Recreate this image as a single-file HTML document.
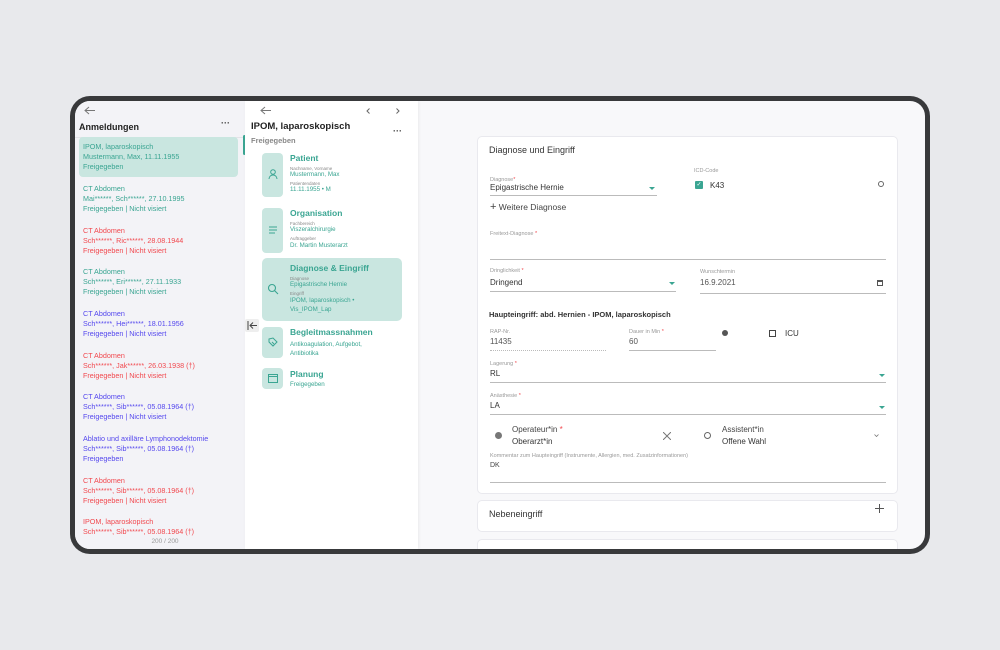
<!DOCTYPE html>
<html><head><meta charset="utf-8"><style>
*{margin:0;padding:0;box-sizing:border-box}
body{width:1000px;height:650px;background:#e8e9ec;font-family:"Liberation Sans",sans-serif;position:relative;overflow:hidden}
.a{position:absolute;white-space:nowrap}
#dev{position:absolute;left:70px;top:96px;width:860px;height:458px;background:#38393b;border-radius:20px}
#scr{position:absolute;left:75px;top:101px;width:850px;height:448px;border-radius:15px;overflow:hidden;background:#f8f8fa}
#left{position:absolute;left:0;top:0;width:170px;height:448px;background:#f3f3f7}
#mid{position:absolute;left:170px;top:0;width:173px;height:448px;background:#fff;box-shadow:1px 0 3px rgba(0,0,0,.06)}
.it{position:absolute;left:8px;font-size:7.2px;line-height:10px}
.g{color:#3aa592}.r{color:#f2494f}.b{color:#5548ee}
.card{position:absolute;background:#fff;border:1px solid #e9e9ee;border-radius:5px}
.lb{position:absolute;font-size:5.5px;color:#999;white-space:nowrap}
.vl{position:absolute;font-size:8px;color:#333;white-space:nowrap}
.ln{position:absolute;height:1px;background:#bbb}
.tri{position:absolute;width:0;height:0;border-left:3px solid transparent;border-right:3px solid transparent;border-top:3px solid #3aa592}
.ic{position:absolute;left:17px;width:21px;background:#c9e6e0;border-radius:4px}
.mt{position:absolute;left:45px;font-size:8.5px;color:#3aa592;font-weight:bold}
.ms{position:absolute;left:45px;font-size:4.5px;color:#888}
.mv{position:absolute;left:45px;font-size:6.2px;color:#3aa592}
.arr{position:absolute;top:5px}
</style></head><body>
<div id="dev"></div>
<div id="scr">
 <div id="left">
  <svg class="arr" style="left:9px" width="12" height="9" viewBox="0 0 12 9" fill="none" stroke="#777" stroke-width="1"><path d="M11 4.5H1M5 1L1 4.5 5 8"/></svg>
  <div class="a" style="left:4px;top:21px;font-size:9px;font-weight:bold;color:#222">Anmeldungen</div>
  <div class="a" style="left:146px;top:17px;font-size:9px;color:#444;font-weight:bold">···</div>
  <div style="position:absolute;left:0;top:36px;width:170px;height:1px;background:#e3e3e8"></div>
  <div style="position:absolute;left:4px;top:36px;width:159px;height:40px;background:#c9e6e0;border-radius:4px"></div>
  <div class="it g" style="top:41px">IPOM, laparoskopisch<br>Mustermann, Max, 11.11.1955<br>Freigegeben</div>
  <div class="it g" style="top:83px">CT Abdomen<br>Mai******, Sch******, 27.10.1995<br>Freigegeben | Nicht visiert</div>
  <div class="it r" style="top:125px">CT Abdomen<br>Sch******, Ric******, 28.08.1944<br>Freigegeben | Nicht visiert</div>
  <div class="it g" style="top:166px">CT Abdomen<br>Sch******, Eri******, 27.11.1933<br>Freigegeben | Nicht visiert</div>
  <div class="it b" style="top:208px">CT Abdomen<br>Sch******, Hei******, 18.01.1956<br>Freigegeben | Nicht visiert</div>
  <div class="it r" style="top:250px">CT Abdomen<br>Sch******, Jak******, 26.03.1938 (†)<br>Freigegeben | Nicht visiert</div>
  <div class="it b" style="top:291px">CT Abdomen<br>Sch******, Sib******, 05.08.1964 (†)<br>Freigegeben | Nicht visiert</div>
  <div class="it b" style="top:333px">Ablatio und axilläre Lymphonodektomie<br>Sch******, Sib******, 05.08.1964 (†)<br>Freigegeben</div>
  <div class="it r" style="top:375px">CT Abdomen<br>Sch******, Sib******, 05.08.1964 (†)<br>Freigegeben | Nicht visiert</div>
  <div class="it r" style="top:416px">IPOM, laparoskopisch<br>Sch******, Sib******, 05.08.1964 (†)</div>
  <div class="a" style="left:60px;top:437px;font-size:6.5px;color:#999;background:#f3f3f7;width:60px;text-align:center;height:11px">200 / 200</div>
 </div>
 <div style="position:absolute;left:168px;top:34px;width:3px;height:20px;background:#3aa592;border-radius:2px"></div>
 <div id="mid">
  <svg class="arr" style="left:15px" width="12" height="9" viewBox="0 0 12 9" fill="none" stroke="#777" stroke-width="1"><path d="M11 4.5H1M5 1L1 4.5 5 8"/></svg>
  <svg class="a" style="left:121px;top:7px" width="4" height="6" viewBox="0 0 4 6" fill="none" stroke="#666" stroke-width="1"><path d="M3.5 .5L1 3l2.5 2.5"/></svg>
  <svg class="a" style="left:151px;top:7px" width="4" height="6" viewBox="0 0 4 6" fill="none" stroke="#666" stroke-width="1"><path d="M.5 .5L3 3 .5 5.5"/></svg>
  <div class="a" style="left:6px;top:20px;font-size:9.5px;font-weight:bold;color:#222">IPOM, laparoskopisch</div>
  <div class="a" style="left:148px;top:25px;font-size:9px;color:#444;font-weight:bold">···</div>
  <div class="a" style="left:6px;top:35px;font-size:7.5px;color:#888;font-weight:bold">Freigegeben</div>
  <div class="ic" style="top:52px;height:44px"></div>
  <svg class="a" style="left:22px;top:67px" width="12" height="12" viewBox="0 0 12 12" fill="none" stroke="#3aa592" stroke-width="1"><circle cx="6" cy="4" r="2.3"/><path d="M2 11c0-2.5 2-4 4-4s4 1.5 4 4"/></svg>
  <div class="mt" style="top:52px">Patient</div>
  <div class="ms" style="top:65px">Nachname, Vorname</div>
  <div class="mv" style="top:70px">Mustermann, Max</div>
  <div class="ms" style="top:80px">Patientendaten</div>
  <div class="mv" style="top:85px">11.11.1955 • M</div>
  <div class="ic" style="top:107px;height:45px"></div>
  <svg class="a" style="left:22px;top:124px" width="12" height="10" viewBox="0 0 12 10" stroke="#3aa592" stroke-width="1"><path d="M2 2h8M2 5h8M2 8h6"/></svg>
  <div class="mt" style="top:107px">Organisation</div>
  <div class="ms" style="top:120px">Fachbereich</div>
  <div class="mv" style="top:125px">Viszeralchirurgie</div>
  <div class="ms" style="top:135px">Auftraggeber</div>
  <div class="mv" style="top:141px">Dr. Martin Musterarzt</div>
  <div style="position:absolute;left:17px;top:157px;width:140px;height:63px;background:#c9e6e0;border-radius:5px"></div>
  <svg class="a" style="left:22px;top:182px" width="12" height="12" viewBox="0 0 12 12" fill="none" stroke="#3aa592" stroke-width="1.1"><circle cx="5" cy="5" r="3.5"/><path d="M7.5 7.5L11 11"/></svg>
  <div class="mt" style="top:162px">Diagnose &amp; Eingriff</div>
  <div class="ms" style="top:175px">Diagnose</div>
  <div class="mv" style="top:180px">Epigastrische Hernie</div>
  <div class="ms" style="top:190px">Eingriff</div>
  <div class="mv" style="top:196px">IPOM, laparoskopisch •</div>
  <div class="mv" style="top:205px">Vis_IPOM_Lap</div>
  <div class="ic" style="top:226px;height:31px"></div>
  <svg class="a" style="left:22px;top:235px" width="12" height="12" viewBox="0 0 12 12" fill="none" stroke="#3aa592" stroke-width="1"><path d="M2 3l4-1 4 4-4 4-4-4z"/><path d="M5 6l2 2"/></svg>
  <div class="mt" style="top:226px">Begleitmassnahmen</div>
  <div class="mv" style="top:240px">Antikoagulation, Aufgebot,</div>
  <div class="mv" style="top:249px">Antibiotika</div>
  <div class="ic" style="top:267px;height:21px"></div>
  <svg class="a" style="left:22px;top:272px" width="12" height="11" viewBox="0 0 12 11" fill="none" stroke="#3aa592" stroke-width="1"><rect x="1.5" y="1.5" width="9" height="8"/><path d="M1.5 3.5h9"/></svg>
  <div class="mt" style="top:268px">Planung</div>
  <div class="mv" style="top:280px">Freigegeben</div>
 </div>
 <div style="position:absolute;left:170px;top:218px;width:14px;height:13px;background:#eee;border-radius:2px"></div>
 <svg class="a" style="left:172px;top:220px" width="10" height="9" viewBox="0 0 10 9" fill="none" stroke="#444" stroke-width="1"><path d="M1 0v9M10 4.5H3M6 1.5L3 4.5 6 7.5"/></svg>
 <div class="card" style="left:402px;top:35px;width:421px;height:358px"></div>
 <div class="a" style="left:414px;top:44px;font-size:9px;color:#333">Diagnose und Eingriff</div>
 <div class="lb" style="left:415px;top:76px">Diagnose<span style="color:#f2494f">*</span></div>
 <div class="vl" style="left:415px;top:82px">Epigastrische Hernie</div>
 <div class="tri" style="left:574px;top:86px"></div>
 <div class="ln" style="left:415px;top:94px;width:167px"></div>
 <div class="lb" style="left:619px;top:67px">ICD-Code</div>
 <div style="position:absolute;left:620px;top:80px;width:8px;height:8px;background:#3aa592;border-radius:1px;color:#fff;font-size:6px;line-height:8px;text-align:center">✓</div>
 <div class="vl" style="left:635px;top:80px">K43</div>
 <div style="position:absolute;left:803px;top:80px;width:6px;height:6px;border:1px solid #666;border-radius:50%"></div>
 <div class="vl" style="left:415px;top:100px;font-size:8.5px;color:#444"><span style="font-size:11px">+</span> Weitere Diagnose</div>
 <div class="lb" style="left:415px;top:130px">Freitext-Diagnose <span style="color:#f2494f">*</span></div>
 <div class="ln" style="left:415px;top:158px;width:396px"></div>
 <div class="lb" style="left:415px;top:167px">Dringlichkeit <span style="color:#f2494f">*</span></div>
 <div class="vl" style="left:415px;top:177px">Dringend</div>
 <div class="tri" style="left:594px;top:181px"></div>
 <div class="ln" style="left:415px;top:190px;width:186px"></div>
 <div class="lb" style="left:625px;top:168px">Wunschtermin</div>
 <div class="vl" style="left:625px;top:177px;color:#555">16.9.2021</div>
 <div style="position:absolute;left:802px;top:179px;width:6px;height:6px;border:1px solid #555;border-top-width:2px"></div>
 <div class="ln" style="left:625px;top:192px;width:186px"></div>
 <div class="a" style="left:414px;top:209px;font-size:7.5px;font-weight:bold;color:#333">Haupteingriff: abd. Hernien - IPOM, laparoskopisch</div>
 <div class="lb" style="left:415px;top:228px">RAP-Nr.</div>
 <div class="vl" style="left:415px;top:236px;color:#555">11435</div>
 <div style="position:absolute;left:415px;top:249px;width:116px;border-top:1px dotted #bbb"></div>
 <div class="lb" style="left:554px;top:228px">Dauer in Min <span style="color:#f2494f">*</span></div>
 <div class="vl" style="left:554px;top:236px;color:#555">60</div>
 <div class="ln" style="left:554px;top:249px;width:87px"></div>
 <div style="position:absolute;left:647px;top:229px;width:6px;height:6px;background:#555;border-radius:50%"></div>
 <div style="position:absolute;left:694px;top:229px;width:7px;height:7px;border:1px solid #444"></div>
 <div class="vl" style="left:710px;top:228px">ICU</div>
 <div class="lb" style="left:415px;top:260px">Lagerung <span style="color:#f2494f">*</span></div>
 <div class="vl" style="left:415px;top:268px">RL</div>
 <div class="tri" style="left:804px;top:273px"></div>
 <div class="ln" style="left:415px;top:281px;width:396px"></div>
 <div class="lb" style="left:415px;top:292px">Anästhesie <span style="color:#f2494f">*</span></div>
 <div class="vl" style="left:415px;top:300px">LA</div>
 <div class="tri" style="left:804px;top:305px"></div>
 <div class="ln" style="left:415px;top:313px;width:396px"></div>
 <div style="position:absolute;left:420px;top:331px;width:7px;height:7px;background:#777;border-radius:50%"></div>
 <div class="vl" style="left:437px;top:324px;color:#444">Operateur*in <span style="color:#f2494f">*</span></div>
 <div class="vl" style="left:437px;top:336px;color:#333">Oberarzt*in</div>
 <svg class="a" style="left:588px;top:331px" width="8" height="8" viewBox="0 0 8 8" stroke="#777" stroke-width="1"><path d="M0 0l8 8M8 0L0 8"/></svg>
 <div style="position:absolute;left:629px;top:331px;width:7px;height:7px;border:1px solid #666;border-radius:50%"></div>
 <div class="vl" style="left:647px;top:324px;color:#444">Assistent*in</div>
 <div class="vl" style="left:647px;top:336px;color:#333">Offene Wahl</div>
 <svg class="a" style="left:799px;top:333px" width="5" height="3" viewBox="0 0 5 3" fill="none" stroke="#777" stroke-width=".8"><path d="M.5 .5L2.5 2.5 4.5 .5"/></svg>
 <div class="lb" style="left:415px;top:352px">Kommentar zum Haupteingriff (Instrumente, Allergien, med. Zusatzinformationen)</div>
 <div class="vl" style="left:415px;top:361px;font-size:7px;color:#444">DK</div>
 <div class="ln" style="left:415px;top:381px;width:396px"></div>
 <div class="card" style="left:402px;top:399px;width:421px;height:32px"></div>
 <div class="a" style="left:414px;top:408px;font-size:9px;color:#333">Nebeneingriff</div>
 <svg class="a" style="left:800px;top:403px" width="9" height="9" viewBox="0 0 9 9" stroke="#555" stroke-width="1"><path d="M4.5 0v9M0 4.5h9"/></svg>
 <div class="card" style="left:402px;top:438px;width:421px;height:30px"></div>
</div>
</body></html>
